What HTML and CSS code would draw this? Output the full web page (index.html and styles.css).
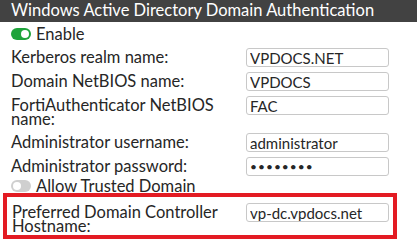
FILE: index.html
```html
<html>
    <head>
        <meta charset="utf-8" />
        <link rel="stylesheet" href="styles.css">
    </head>
    <body>
        <div class="title">Windows Active Directory Domain Authentication</div>
        <div class="form">
            <div class="switch-row">
                <span class="switch on"></span>
                <span>Enable</span>
            </div>

            <div class="row">
                <label>Kerberos realm name:</label>
                <input type="text" value="VPDOCS.NET">
            </div>

            <div class="row">
                <label>Domain NetBIOS name:</label>
                <input type="text" value="VPDOCS">
            </div>

            <div class="row wrap">
                <label>FortiAuthenticator NetBIOS name:</label>
                <input type="text" value="FAC">
            </div>

            <div class="row">
                <label>Administrator username:</label>
                <input type="text" value="administrator">
            </div>

            <div class="row">
                <label>Administrator password:</label>
                <input type="password" value="secret12">
            </div>

            <div class="switch-row trusted">
                <span class="switch"></span>
                <span>Allow Trusted Domain</span>
            </div>

            <div class="highlight">
                <div class="row wrap">
                    <label>Preferred Domain Controller Hostname:</label>
                    <input type="text" value="vp-dc.vpdocs.net">
                </div>
            </div>
        </div>
    </body>
</html>
```

FILE: styles.css
```css
body {
    margin: 0;
    font-family: Lato, "Open Sans", sans-serif;
    font-size: 16.5px;
    color: #262626;
    background-color: white;
}

.title {
    height: 22px;
    line-height: 21px;
    padding-left: 11px;
    background-color: #424242;
    color: white;
    font-size: 16.5px;
}

.switch-row {
    display: flex;
    align-items: center;
    gap: 5px;
    height: 23px;
    padding-left: 11px;
}

.switch-row.trusted {
    height: 15px;
}

.switch {
    position: relative;
    width: 20px;
    height: 12px;
    border-radius: 6px;
    background-color: #cfcfcf;
}

.switch::after {
    content: "";
    position: absolute;
    top: 2px;
    left: 2px;
    width: 8px;
    height: 8px;
    border-radius: 50%;
    background-color: white;
}

.switch.on {
    background-color: #1fa33b;
}

.switch.on::after {
    left: 10px;
}

.row {
    display: grid;
    grid-template-columns: 235px 143px;
    align-items: start;
    padding: 3px 0 2px 11px;
}

.row label {
    line-height: 19px;
}

.row.wrap {
    padding-bottom: 4px;
}

.row.wrap label {
    line-height: 14px;
    padding-top: 2px;
    padding-right: 30px;
}

input {
    box-sizing: border-box;
    width: 143px;
    height: 19px;
    margin: 0;
    padding: 0 3px;
    border: solid 1px #c8c8c8;
    border-radius: 3px;
    font-family: Lato, "Open Sans", sans-serif;
    font-size: 15px;
    color: #262626;
}

input[type=password] {
    font-size: 12px;
    letter-spacing: 1px;
}

.highlight {
    width: 386px;
    margin-left: 3px;
    border: solid 4px #e31b23;
}

.highlight .row {
    grid-template-columns: 234px 143px;
    padding: 6px 0 2px 5px;
}

.highlight .row label {
    padding-right: 0;
}
```
